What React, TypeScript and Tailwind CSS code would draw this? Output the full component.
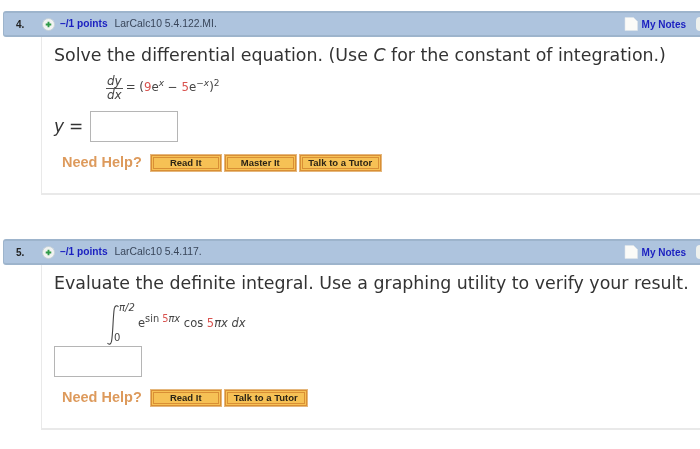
import type { ReactNode } from 'react';

const sans = 'font-["Liberation_Sans",Arial,sans-serif]';
const math = 'font-["DejaVu_Sans",Verdana,sans-serif]';

function Red({ children }: { children: ReactNode }) {
  return <span className="text-[#d9534f]">{children}</span>;
}

function PlusIcon() {
  return (
    <svg width="13" height="13" viewBox="0 0 14 14" className="shrink-0">
      <circle cx="7" cy="7" r="6.5" fill="#f1f3f1" stroke="#c4cfd8" />
      <path d="M7 4v6M4 7h6" stroke="#2f9a48" strokeWidth="2" />
    </svg>
  );
}

function NoteIcon() {
  return (
    <svg width="14" height="14" viewBox="0 0 14 14" className="shrink-0">
      <path d="M1 0.5h8.500l4 4v9h-12.500z" fill="#fbfbf8" stroke="#dfe4ea" strokeWidth="0.6" />
    </svg>
  );
}

function IntegralIcon() {
  return (
    <svg width="14" height="42" viewBox="0 0 14 42" className="mt-[3px] block shrink-0">
      <path d="M12.500 3c-1.500-2-3.500-1.500-4.200 1.500C7 12 7 30 5.500 37.500 4.800 40.500 2.800 41 1.500 39" fill="none" stroke="#444" strokeWidth="1.100" />
    </svg>
  );
}

function HeaderBar({ number, code }: { number: string; code: string }) {
  return (
    <div className={`flex h-[26px] items-center rounded-l-[3px] border-y-2 border-l border-[#9db4cc] bg-[#aec4de] ${sans}`}>
      <span className="ml-[12px] w-[26px] text-[10px] font-bold text-[#222]">{number}</span>
      <PlusIcon />
      <span className="ml-[5px] text-[10.2px] font-bold text-[#1a1fc0]">–/1 points</span>
      <span className="ml-[7px] text-[10.4px] text-[#39465a]">{code}</span>
      <span className="ml-auto flex items-center">
        <NoteIcon />
        <span className="ml-[4px] text-[10px] font-bold text-[#1a1fc0]">My Notes</span>
        <span className="ml-[10px] h-[14px] w-[4px] rounded-l-full bg-[#eef1ee]" />
      </span>
    </div>
  );
}

function HelpButton({ label, width }: { label: string; width: string }) {
  return (
    <button className={`flex h-[16px] items-center justify-center border-[3px] border-double border-[#d98f35] bg-[#f6c155] text-[9.500px] font-bold text-[#2c2416] outline outline-1 outline-[#e5b77c] ${width} ${sans}`}>
      {label}
    </button>
  );
}

function HelpRow({ buttons }: { buttons: [string, string][] }) {
  return (
    <div className="flex items-center">
      <span className={`ml-[8px] mr-[9px] text-[14.500px] font-bold text-[#dd9a5c] ${sans}`}>Need Help?</span>
      <div className="flex gap-[4px]">
        {buttons.map(([label, width]) => (
          <HelpButton key={label} label={label} width={width} />
        ))}
      </div>
    </div>
  );
}

function AnswerBox() {
  return <div className="h-[31px] w-[88px] border border-[#b5b5b5] bg-white" />;
}

export default function App() {
  return (
    <div className="h-[449px] w-[700px] overflow-hidden bg-white pl-[3px] pt-[11px] blur-[0.3px]">
      <section>
        <HeaderBar number="4." code="LarCalc10 5.4.122.MI." />
        <div className="ml-[38px] h-[158px] border-b-2 border-l border-[#e9e9e9] pl-[12px] pt-[7px]">
          <p className={`text-[17.400px] leading-[22px] text-[#333] ${math}`}>
            Solve the differential equation. (Use <i>C</i> for the constant of integration.)
          </p>
          <div className={`ml-[52px] mt-[8px] flex h-[29px] items-center text-[11.800px] text-[#444] ${math}`}>
            <span className="flex flex-col items-center text-[12px] italic leading-[13px]">
              <span className="border-b border-[#555] px-[1px]">dy</span>
              <span>dx</span>
            </span>
            <span className="ml-[3px] -translate-y-[1px]">
              = (<Red>9</Red>e<sup className="text-[9px] italic">x</sup> − <Red>5</Red>e
              <sup className="text-[9px]">−<i>x</i></sup>)<sup className="text-[9px]">2</sup>
            </span>
          </div>
          <div className={`mt-[8px] flex items-center text-[17px] text-[#333] ${math}`}>
            <i>y</i>
            <span className="ml-[5px] mr-[7px]">=</span>
            <AnswerBox />
          </div>
          <div className="mt-[10px]">
            <HelpRow
              buttons={[
                ['Read It', 'w-[70px]'],
                ['Master It', 'w-[71px]'],
                ['Talk to a Tutor', 'w-[81px]'],
              ]}
            />
          </div>
        </div>
      </section>

      <section className="mt-[44px]">
        <HeaderBar number="5." code="LarCalc10 5.4.117." />
        <div className="ml-[38px] h-[165px] border-b-2 border-l border-[#e9e9e9] pl-[12px] pt-[7px]">
          <p className={`text-[17.400px] leading-[22px] text-[#333] ${math}`}>
            Evaluate the definite integral. Use a graphing utility to verify your result.
          </p>
          <div className={`ml-[52px] mt-[7px] flex h-[42px] items-center text-[11.500px] text-[#444] ${math}`}>
            <span className="relative h-[42px] w-[32px]">
              <IntegralIcon />
              <span className="absolute left-[13px] top-[-1px] text-[10px] italic">π/2</span>
              <span className="absolute left-[8px] top-[29px] text-[10px]">0</span>
            </span>
            <span className="mt-[4px]">
              e<sup className="text-[9.800px]">sin <Red>5</Red><i>πx</i></sup> cos <Red>5</Red><i>πx dx</i>
            </span>
          </div>
          <div className="mt-[3px]">
            <AnswerBox />
          </div>
          <div className="mt-[10px]">
            <HelpRow
              buttons={[
                ['Read It', 'w-[70px]'],
                ['Talk to a Tutor', 'w-[82px]'],
              ]}
            />
          </div>
        </div>
      </section>
    </div>
  );
}
